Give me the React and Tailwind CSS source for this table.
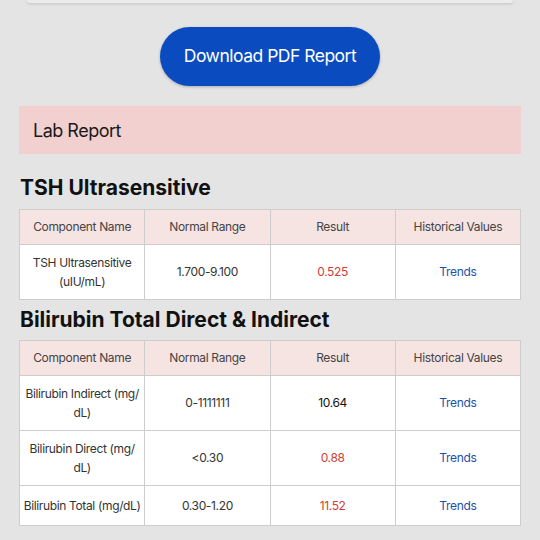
import React from "react";

const tsh = [
  { name: "TSH Ultrasensitive (uIU/mL)", range: "1.700-9.100", result: "0.525", flag: true, h: "h-[55px]" },
];

const bilirubin = [
  { name: "Bilirubin Indirect (mg/ dL)", range: "0-1111111", result: "10.64", flag: false, h: "h-[55px]" },
  { name: "Bilirubin Direct (mg/ dL)", range: "<0.30", result: "0.88", flag: true, h: "h-[55px]" },
  { name: "Bilirubin Total (mg/dL)", range: "0.30-1.20", result: "11.52", flag: true, h: "h-[40px]" },
];

const ReportTable = ({ rows }) => {
  return (
    <table className="w-full table-fixed border-collapse bg-white text-[12px] tracking-[-0.35px] text-[#333]">
      <thead>
        <tr className="h-[35px] bg-[#f6e4e3] text-[#444]">
          <th className="border border-[#cdcdcd] font-normal">Component Name</th>
          <th className="border border-[#cdcdcd] font-normal">Normal Range</th>
          <th className="border border-[#cdcdcd] font-normal">Result</th>
          <th className="border border-[#cdcdcd] font-normal">Historical Values</th>
        </tr>
      </thead>
      <tbody>
        {rows.map((row, index) => (
          <tr className={row.h} key={index}>
            <td className="border border-[#cdcdcd] px-[2px] text-center leading-[19px]">{row.name}</td>
            <td className="border border-[#cdcdcd] text-center">{row.range}</td>
            <td className={`border border-[#cdcdcd] text-center ${row.flag ? "text-[#d23b35]" : "text-[#111]"}`}>
              {row.result}
            </td>
            <td className="border border-[#cdcdcd] text-center text-[#1f50a6]">Trends</td>
          </tr>
        ))}
      </tbody>
    </table>
  );
};

export default function App() {
  return (
    <div className="min-h-screen bg-[#e4e4e4] px-[19px] font-['Inter','Noto_Sans',sans-serif]">
      {/* bottom edge of the card above */}
      <div className="mx-[8px] h-[3px] rounded-b-md bg-[#ececec] shadow-[0_1px_3px_rgba(0,0,0,0.15)]" />

      <div className="mt-[24px] flex justify-center">
        <button className="h-[59px] w-[220px] rounded-full bg-[#0a4bbf] text-[17.5px] tracking-[-0.5px] text-white shadow-[0_1px_3px_rgba(0,0,0,0.25)]">
          Download PDF Report
        </button>
      </div>

      <div className="mt-[20px] flex h-[48px] items-center bg-[#f1d0cf] px-[14px] text-[18px] tracking-[-0.5px] text-[#1a1a1a]">
        Lab Report
      </div>

      <h2 className="mt-[20px] mb-[7px] pl-px text-[21px] leading-[28px] font-bold text-[#111]">TSH Ultrasensitive</h2>
      <ReportTable rows={tsh} />

      <h2 className="mt-[6px] mb-[6px] pl-px text-[21px] leading-[28px] font-bold text-[#111]">
        Bilirubin Total Direct &amp; Indirect
      </h2>
      <ReportTable rows={bilirubin} />
    </div>
  );
}
